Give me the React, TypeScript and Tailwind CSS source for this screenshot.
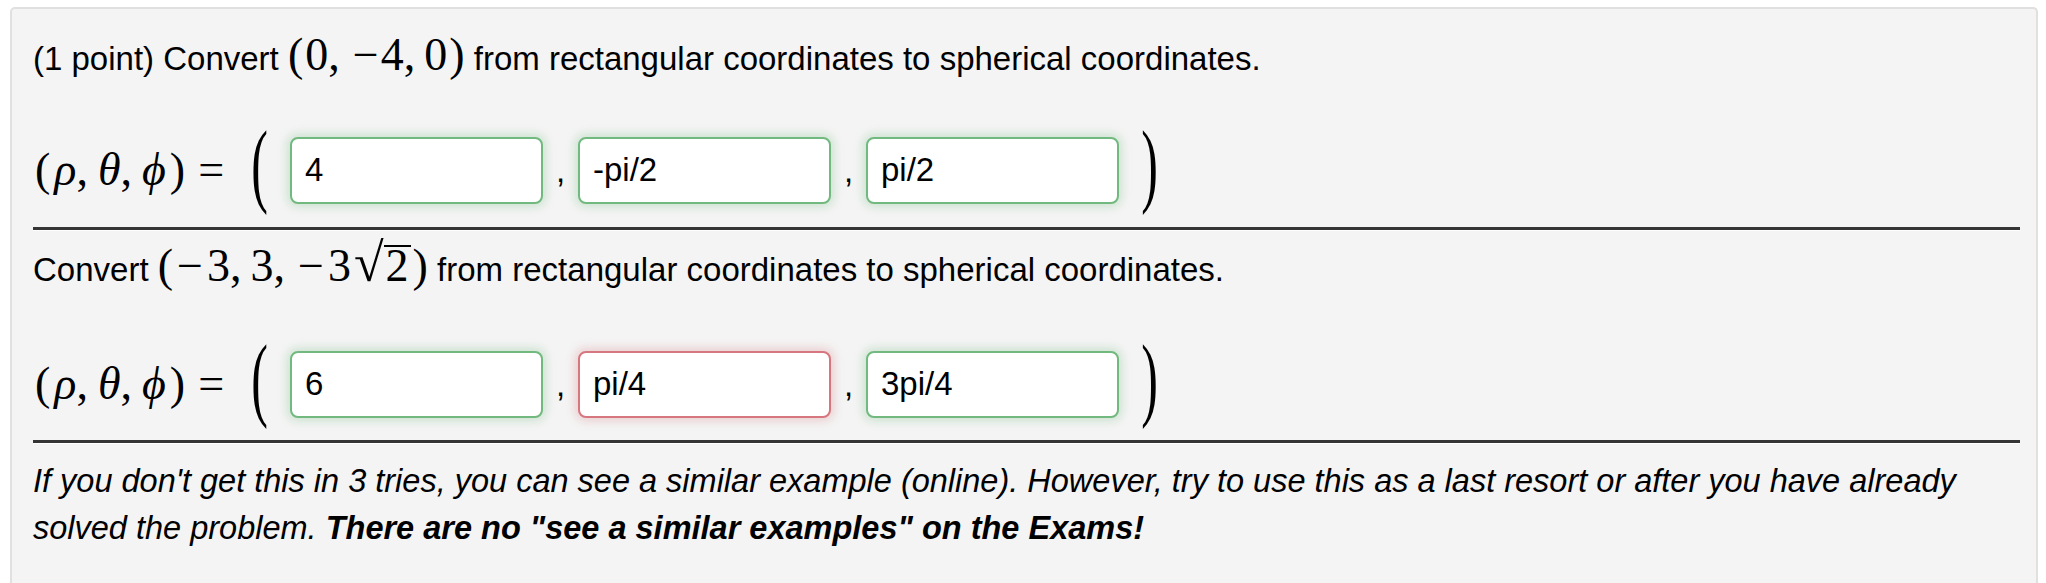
import React from "react";

type State = "ok" | "bad";

function Field({ value, state }: { value: string; state: State }) {
  const cls =
    state === "ok"
      ? "border-[#72b97f] shadow-[0_0_10px_3px_rgba(114,185,127,0.3)]"
      : "border-[#d6767e] shadow-[0_0_10px_3px_rgba(214,118,126,0.3)]";
  return (
    <input
      readOnly
      value={value}
      className={`h-[67px] w-[253px] rounded-[8px] border-2 bg-white pl-[13px] text-[33px] text-black outline-none font-['Liberation_Sans',Arial,sans-serif] ${cls}`}
    />
  );
}

function BigParen({ ch }: { ch: string }) {
  return (
    <span className="inline-block w-[23px] -translate-y-[6px] scale-y-[1.85] text-center font-['Liberation_Serif','DejaVu_Serif',serif] text-[50px] leading-none">
      {ch}
    </span>
  );
}

function Comma() {
  return <span className="w-[35px] text-center leading-none">,</span>;
}

const SERIF = "font-['Liberation_Serif','DejaVu_Serif',serif]";

function Label() {
  return (
    <span className={`w-[215px] pl-[2px] ${SERIF} text-[46px] leading-none whitespace-nowrap`}>
      <span className="mr-[4px]">(</span>
      <i>ρ</i>,<span className="inline-block w-[10px]" />
      <i>θ</i>,<span className="inline-block w-[10px]" />
      <i>ϕ</i>
      <span className="ml-[4px]">)</span>
      <span className="ml-[13px]">=</span>
    </span>
  );
}

function Row({ values }: { values: [string, State][] }) {
  return (
    <div className="flex h-[84px] items-center">
      <Label />
      <BigParen ch="(" />
      <span className="w-[19px]" />
      <Field value={values[0][0]} state={values[0][1]} />
      <Comma />
      <Field value={values[1][0]} state={values[1][1]} />
      <Comma />
      <Field value={values[2][0]} state={values[2][1]} />
      <span className="w-[19px]" />
      <BigParen ch=")" />
    </div>
  );
}

function Rule() {
  return <div className="h-[4px] border-t-[3px] border-b border-t-[#353535] border-b-white" />;
}

const M = `${SERIF} text-[46px] leading-[40px]`;

export default function App() {
  return (
    <div className="min-h-[583px] bg-white pl-[10px] pr-[8px] pt-[7px] text-black font-['Liberation_Sans',Arial,sans-serif] text-[33px]">
      <div className="h-[576px] rounded-t-[5px] border-2 border-b-0 border-[#e0e0e0] bg-[#f4f4f4] pl-[21px] pr-[16px]">
        <p className="mt-[26px] leading-[47px] whitespace-nowrap">
          (1 point) Convert{" "}
          <span className={M}>
            <span className="mr-[2px]">(</span>0,<span className="inline-block w-[9px]" />
            <span className="ml-[4px] mr-[2px]">−</span>4,<span className="inline-block w-[9px]" />0
            <span className="ml-[2px]">)</span>
          </span>{" "}
          from rectangular coordinates to spherical coordinates.
        </p>
        <div className="mt-[46px]">
          <Row
            values={[
              ["4", "ok"],
              ["-pi/2", "ok"],
              ["pi/2", "ok"],
            ]}
          />
        </div>
        <div className="mt-[15px]">
          <Rule />
        </div>
        <p className="mt-[12px] leading-[47px] whitespace-nowrap">
          Convert{" "}
          <span className={M}>
            <span className="mr-[2px]">(</span>
            <span className="ml-[2px] mr-[4px]">−</span>3,<span className="inline-block w-[9px]" />3,
            <span className="inline-block w-[9px]" />
            <span className="ml-[4px] mr-[4px]">−</span>3
            <span className="ml-[3px] inline-block text-[54px]">√</span>
            <span className="inline-block border-t-2 border-black px-[2px] leading-[38px]">2</span>
            <span className="ml-[2px]">)</span>
          </span>{" "}
          from rectangular coordinates to spherical coordinates.
        </p>
        <div className="mt-[49px]">
          <Row
            values={[
              ["6", "ok"],
              ["pi/4", "bad"],
              ["3pi/4", "ok"],
            ]}
          />
        </div>
        <div className="mt-[14px]">
          <Rule />
        </div>
        <p className="mt-[14px] italic text-[32.5px] leading-[47px]">
          If you don't get this in 3 tries, you can see a similar example (online). However, try to use this as a last
          resort or after you have already
          <br />
          solved the problem. <b>There are no "see a similar examples" on the Exams!</b>
        </p>
      </div>
    </div>
  );
}
